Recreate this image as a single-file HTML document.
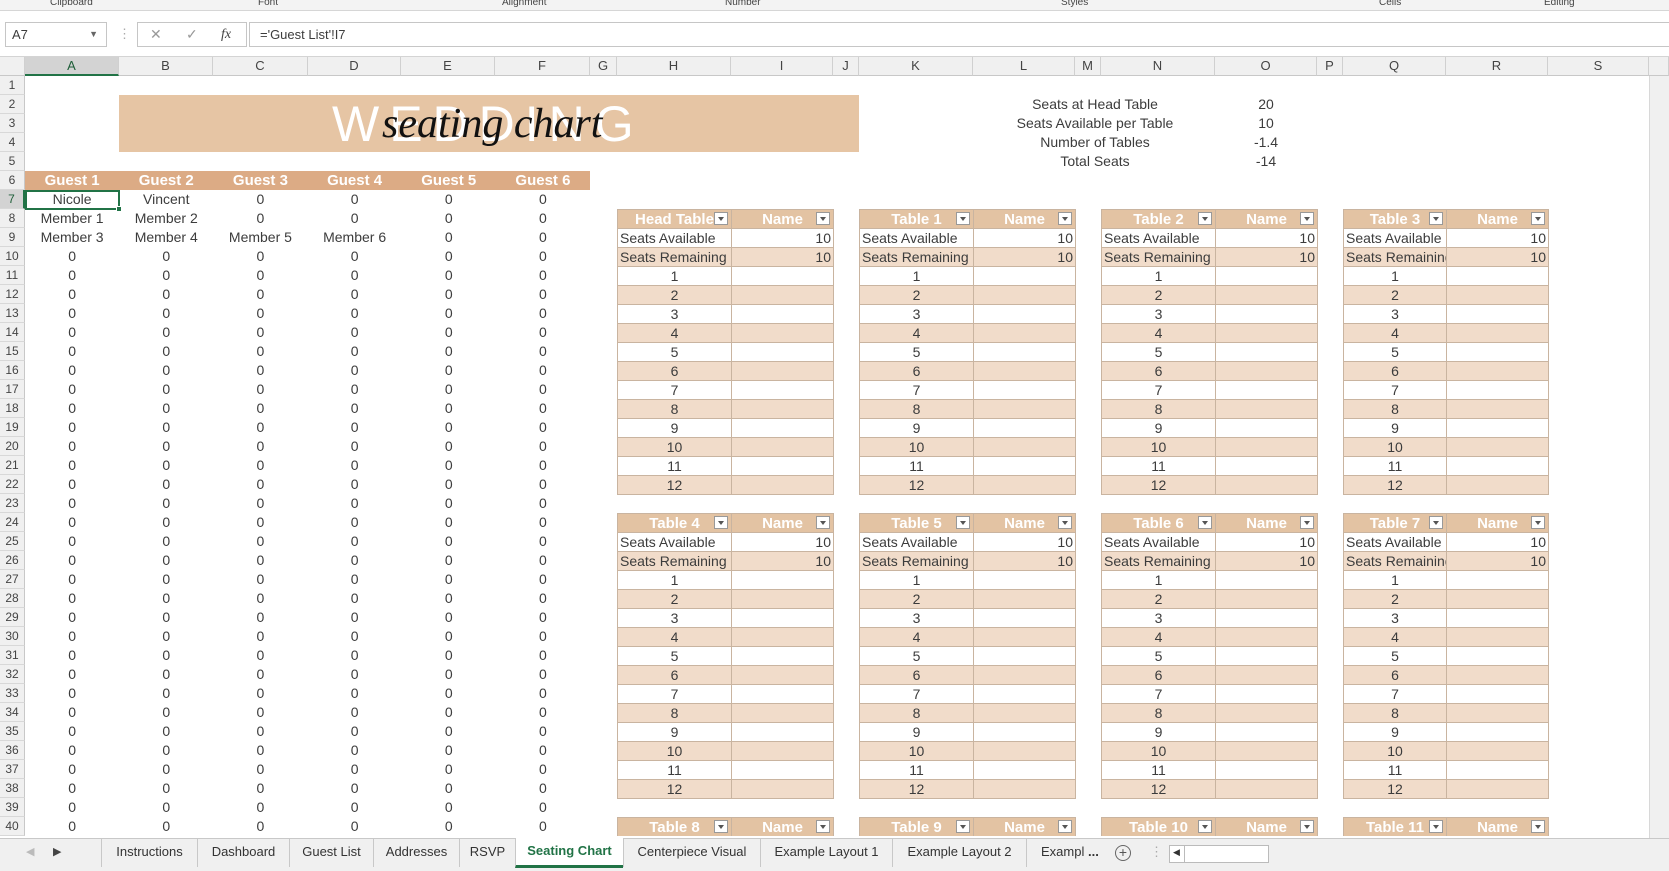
<!DOCTYPE html>
<html><head><meta charset="utf-8"><style>
*{margin:0;padding:0;box-sizing:border-box}
body{width:1669px;height:871px;overflow:hidden;background:#fff;font-family:"Liberation Sans",sans-serif;color:#3c3c3c;position:relative}
.abs{position:absolute}
.rib{left:0;top:0;width:1669px;height:11px;background:#f3f3f3;border-bottom:1px solid #d6d6d6;font-size:10px;color:#444;line-height:8px;overflow:hidden}
.rib span{position:absolute;top:-1px}
.fbar{left:0;top:11px;width:1669px;height:46px;background:#fff;border-bottom:1px solid #d4d4d4}
.nb{left:5px;top:22px;width:102px;height:25px;border:1px solid #c6c6c6;font-size:13px;line-height:23px;padding-left:6px}
.fx{left:137px;top:22px;width:110px;height:25px;border:1px solid #c6c6c6;font-size:14px;color:#999;line-height:23px}
.fin{left:249px;top:22px;width:1430px;height:25px;border:1px solid #c6c6c6;font-size:13px;line-height:23px;padding-left:10px}
.ch{top:57px;height:19px;background:#f0f0f0;border-right:1px solid #d0d0d0;border-bottom:1px solid #c8c8c8;font-size:13px;line-height:18px;text-align:center;color:#444}
.rh{left:0;width:25px;height:19px;background:#f0f0f0;border-bottom:1px solid #d8d8d8;border-right:1px solid #c8c8c8;font-size:12px;line-height:19px;text-align:center;color:#444}
.sheet{left:0;top:76px;width:1649px;height:760px;overflow:hidden}
.g{position:absolute;left:25px;width:565px;height:19px;display:flex;font-size:14px;line-height:19px}
.g div{width:94.2px;text-align:center}
.tb{position:absolute;border-collapse:collapse;font-size:14px;table-layout:fixed}
.tb td{height:19px;border:1px solid #c9b4a0;padding:0 2px;line-height:17px;white-space:nowrap;overflow:hidden}
.tb tr.h td{background:#e3c3a3;color:#fff;font-weight:bold;font-size:15px;text-align:center;position:relative}
.tb tr.b td{background:#f1dcca}
.tb td.c{text-align:center}
.tb td.r{text-align:right}
.dd{display:inline-block;width:14px;height:13px;background:#fff;border:1px solid #999;vertical-align:middle;position:absolute;right:3px;top:2px}
.dd:after{content:"";position:absolute;left:3px;top:4px;border-left:3px solid transparent;border-right:3px solid transparent;border-top:4px solid #555}
.st{position:absolute;font-size:14px;line-height:19px}
.tabs{left:0;top:838px;width:1669px;height:33px;background:#f0f0f0;border-top:1px solid #c8c8c8;font-size:13px;color:#333}
.tab{position:absolute;top:0;height:28px;line-height:26px;text-align:center;border-left:1px solid #c8c8c8}
</style></head><body>
<div class="abs rib"><span style="left:50px">Clipboard</span><span style="left:258px">Font</span><span style="left:502px">Alignment</span><span style="left:725px">Number</span><span style="left:1061px">Styles</span><span style="left:1379px">Cells</span><span style="left:1544px">Editing</span></div>
<div class="abs fbar"></div>
<div class="abs nb">A7<span style="position:absolute;right:8px;top:0;font-size:9px;color:#666">▼</span></div>
<div class="abs" style="left:118px;top:26px;font-size:13px;color:#aaa">⋮</div>
<div class="abs fx"><span style="position:absolute;left:12px">✕</span><span style="position:absolute;left:48px">✓</span><span style="position:absolute;left:83px;font-style:italic;font-family:'Liberation Serif',serif;color:#444">fx</span></div>
<div class="abs fin">='Guest List'!I7</div>

<div class="abs ch" style="left:0;width:25px;background:#f0f0f0"></div>
<div class="abs ch" style="left:25px;width:94px;background:#d3d3d3;border-bottom:2px solid #217346;color:#1e5e38">A</div>
<div class="abs ch" style="left:119px;width:94px">B</div>
<div class="abs ch" style="left:213px;width:95px">C</div>
<div class="abs ch" style="left:308px;width:93px">D</div>
<div class="abs ch" style="left:401px;width:94px">E</div>
<div class="abs ch" style="left:495px;width:95px">F</div>
<div class="abs ch" style="left:590px;width:27px">G</div>
<div class="abs ch" style="left:617px;width:114px">H</div>
<div class="abs ch" style="left:731px;width:102px">I</div>
<div class="abs ch" style="left:833px;width:26px">J</div>
<div class="abs ch" style="left:859px;width:114px">K</div>
<div class="abs ch" style="left:973px;width:102px">L</div>
<div class="abs ch" style="left:1075px;width:26px">M</div>
<div class="abs ch" style="left:1101px;width:114px">N</div>
<div class="abs ch" style="left:1215px;width:102px">O</div>
<div class="abs ch" style="left:1317px;width:26px">P</div>
<div class="abs ch" style="left:1343px;width:103px">Q</div>
<div class="abs ch" style="left:1446px;width:102px">R</div>
<div class="abs ch" style="left:1548px;width:101px">S</div>
<div class="abs ch" style="left:1649px;width:20px"></div>

<div class="abs" style="left:0;top:76px;width:25px;height:760px;overflow:hidden">
<div class="rh" style="position:relative">1</div><div class="rh" style="position:relative">2</div><div class="rh" style="position:relative">3</div><div class="rh" style="position:relative">4</div><div class="rh" style="position:relative">5</div><div class="rh" style="position:relative">6</div><div class="rh" style="position:relative;background:#d3d3d3;color:#1e5e38;border-right:2px solid #217346">7</div><div class="rh" style="position:relative">8</div><div class="rh" style="position:relative">9</div><div class="rh" style="position:relative">10</div><div class="rh" style="position:relative">11</div><div class="rh" style="position:relative">12</div><div class="rh" style="position:relative">13</div><div class="rh" style="position:relative">14</div><div class="rh" style="position:relative">15</div><div class="rh" style="position:relative">16</div><div class="rh" style="position:relative">17</div><div class="rh" style="position:relative">18</div><div class="rh" style="position:relative">19</div><div class="rh" style="position:relative">20</div><div class="rh" style="position:relative">21</div><div class="rh" style="position:relative">22</div><div class="rh" style="position:relative">23</div><div class="rh" style="position:relative">24</div><div class="rh" style="position:relative">25</div><div class="rh" style="position:relative">26</div><div class="rh" style="position:relative">27</div><div class="rh" style="position:relative">28</div><div class="rh" style="position:relative">29</div><div class="rh" style="position:relative">30</div><div class="rh" style="position:relative">31</div><div class="rh" style="position:relative">32</div><div class="rh" style="position:relative">33</div><div class="rh" style="position:relative">34</div><div class="rh" style="position:relative">35</div><div class="rh" style="position:relative">36</div><div class="rh" style="position:relative">37</div><div class="rh" style="position:relative">38</div><div class="rh" style="position:relative">39</div><div class="rh" style="position:relative">40</div>
</div>

<div class="abs sheet">
<div style="position:absolute;left:119px;top:19px;width:740px;height:57px;background:#e6c5a4"></div>
<div style="position:absolute;left:332px;top:18px;font-size:50px;color:#fff;letter-spacing:10px;line-height:60px">WEDDING</div>
<div style="position:absolute;left:382px;top:18px;font-family:'Liberation Serif',serif;font-style:italic;font-size:42px;color:#111;line-height:60px;letter-spacing:0px">seating chart</div>
<div class="st" style="left:980px;width:230px;text-align:center;top:19px">Seats at Head Table</div>
<div class="st" style="left:980px;width:230px;text-align:center;top:38px">Seats Available per Table</div>
<div class="st" style="left:980px;width:230px;text-align:center;top:57px">Number of Tables</div>
<div class="st" style="left:980px;width:230px;text-align:center;top:76px">Total Seats</div>
<div class="st" style="left:1215px;width:102px;text-align:center;top:19px">20</div>
<div class="st" style="left:1215px;width:102px;text-align:center;top:38px">10</div>
<div class="st" style="left:1215px;width:102px;text-align:center;top:57px">-1.4</div>
<div class="st" style="left:1215px;width:102px;text-align:center;top:76px">-14</div>
<div class="g" style="top:95px;background:#dcab85;color:#fff;font-weight:bold;font-size:15px"><div>Guest 1</div><div>Guest 2</div><div>Guest 3</div><div>Guest 4</div><div>Guest 5</div><div>Guest 6</div></div>
<div style="position:absolute;left:25px;top:114px;width:95px;height:20px;border:2px solid #217346"></div>
<div style="position:absolute;left:116px;top:130px;width:6px;height:6px;background:#217346;border:1px solid #fff"></div>
<div class="g" style="top:114px"><div>Nicole</div><div>Vincent</div><div>0</div><div>0</div><div>0</div><div>0</div></div>
<div class="g" style="top:133px"><div>Member 1</div><div>Member 2</div><div>0</div><div>0</div><div>0</div><div>0</div></div>
<div class="g" style="top:152px"><div>Member 3</div><div>Member 4</div><div>Member 5</div><div>Member 6</div><div>0</div><div>0</div></div>
<div class="g" style="top:171px"><div>0</div><div>0</div><div>0</div><div>0</div><div>0</div><div>0</div></div>
<div class="g" style="top:190px"><div>0</div><div>0</div><div>0</div><div>0</div><div>0</div><div>0</div></div>
<div class="g" style="top:209px"><div>0</div><div>0</div><div>0</div><div>0</div><div>0</div><div>0</div></div>
<div class="g" style="top:228px"><div>0</div><div>0</div><div>0</div><div>0</div><div>0</div><div>0</div></div>
<div class="g" style="top:247px"><div>0</div><div>0</div><div>0</div><div>0</div><div>0</div><div>0</div></div>
<div class="g" style="top:266px"><div>0</div><div>0</div><div>0</div><div>0</div><div>0</div><div>0</div></div>
<div class="g" style="top:285px"><div>0</div><div>0</div><div>0</div><div>0</div><div>0</div><div>0</div></div>
<div class="g" style="top:304px"><div>0</div><div>0</div><div>0</div><div>0</div><div>0</div><div>0</div></div>
<div class="g" style="top:323px"><div>0</div><div>0</div><div>0</div><div>0</div><div>0</div><div>0</div></div>
<div class="g" style="top:342px"><div>0</div><div>0</div><div>0</div><div>0</div><div>0</div><div>0</div></div>
<div class="g" style="top:361px"><div>0</div><div>0</div><div>0</div><div>0</div><div>0</div><div>0</div></div>
<div class="g" style="top:380px"><div>0</div><div>0</div><div>0</div><div>0</div><div>0</div><div>0</div></div>
<div class="g" style="top:399px"><div>0</div><div>0</div><div>0</div><div>0</div><div>0</div><div>0</div></div>
<div class="g" style="top:418px"><div>0</div><div>0</div><div>0</div><div>0</div><div>0</div><div>0</div></div>
<div class="g" style="top:437px"><div>0</div><div>0</div><div>0</div><div>0</div><div>0</div><div>0</div></div>
<div class="g" style="top:456px"><div>0</div><div>0</div><div>0</div><div>0</div><div>0</div><div>0</div></div>
<div class="g" style="top:475px"><div>0</div><div>0</div><div>0</div><div>0</div><div>0</div><div>0</div></div>
<div class="g" style="top:494px"><div>0</div><div>0</div><div>0</div><div>0</div><div>0</div><div>0</div></div>
<div class="g" style="top:513px"><div>0</div><div>0</div><div>0</div><div>0</div><div>0</div><div>0</div></div>
<div class="g" style="top:532px"><div>0</div><div>0</div><div>0</div><div>0</div><div>0</div><div>0</div></div>
<div class="g" style="top:551px"><div>0</div><div>0</div><div>0</div><div>0</div><div>0</div><div>0</div></div>
<div class="g" style="top:570px"><div>0</div><div>0</div><div>0</div><div>0</div><div>0</div><div>0</div></div>
<div class="g" style="top:589px"><div>0</div><div>0</div><div>0</div><div>0</div><div>0</div><div>0</div></div>
<div class="g" style="top:608px"><div>0</div><div>0</div><div>0</div><div>0</div><div>0</div><div>0</div></div>
<div class="g" style="top:627px"><div>0</div><div>0</div><div>0</div><div>0</div><div>0</div><div>0</div></div>
<div class="g" style="top:646px"><div>0</div><div>0</div><div>0</div><div>0</div><div>0</div><div>0</div></div>
<div class="g" style="top:665px"><div>0</div><div>0</div><div>0</div><div>0</div><div>0</div><div>0</div></div>
<div class="g" style="top:684px"><div>0</div><div>0</div><div>0</div><div>0</div><div>0</div><div>0</div></div>
<div class="g" style="top:703px"><div>0</div><div>0</div><div>0</div><div>0</div><div>0</div><div>0</div></div>
<div class="g" style="top:722px"><div>0</div><div>0</div><div>0</div><div>0</div><div>0</div><div>0</div></div>
<div class="g" style="top:741px"><div>0</div><div>0</div><div>0</div><div>0</div><div>0</div><div>0</div></div>

<table class="tb" style="left:617px;top:133px;width:216px"><colgroup><col style="width:114px"><col style="width:102px"></colgroup>
<tr class="h"><td>Head Table<span class="dd"></span></td><td>Name<span class="dd"></span></td></tr>
<tr><td>Seats Available</td><td class="r">10</td></tr><tr class="b"><td>Seats Remaining</td><td class="r">10</td></tr>
<tr><td class="c">1</td><td></td></tr><tr class="b"><td class="c">2</td><td></td></tr><tr><td class="c">3</td><td></td></tr><tr class="b"><td class="c">4</td><td></td></tr><tr><td class="c">5</td><td></td></tr><tr class="b"><td class="c">6</td><td></td></tr><tr><td class="c">7</td><td></td></tr><tr class="b"><td class="c">8</td><td></td></tr><tr><td class="c">9</td><td></td></tr><tr class="b"><td class="c">10</td><td></td></tr><tr><td class="c">11</td><td></td></tr><tr class="b"><td class="c">12</td><td></td></tr></table>
<table class="tb" style="left:859px;top:133px;width:216px"><colgroup><col style="width:114px"><col style="width:102px"></colgroup>
<tr class="h"><td>Table 1<span class="dd"></span></td><td>Name<span class="dd"></span></td></tr>
<tr><td>Seats Available</td><td class="r">10</td></tr><tr class="b"><td>Seats Remaining</td><td class="r">10</td></tr>
<tr><td class="c">1</td><td></td></tr><tr class="b"><td class="c">2</td><td></td></tr><tr><td class="c">3</td><td></td></tr><tr class="b"><td class="c">4</td><td></td></tr><tr><td class="c">5</td><td></td></tr><tr class="b"><td class="c">6</td><td></td></tr><tr><td class="c">7</td><td></td></tr><tr class="b"><td class="c">8</td><td></td></tr><tr><td class="c">9</td><td></td></tr><tr class="b"><td class="c">10</td><td></td></tr><tr><td class="c">11</td><td></td></tr><tr class="b"><td class="c">12</td><td></td></tr></table>
<table class="tb" style="left:1101px;top:133px;width:216px"><colgroup><col style="width:114px"><col style="width:102px"></colgroup>
<tr class="h"><td>Table 2<span class="dd"></span></td><td>Name<span class="dd"></span></td></tr>
<tr><td>Seats Available</td><td class="r">10</td></tr><tr class="b"><td>Seats Remaining</td><td class="r">10</td></tr>
<tr><td class="c">1</td><td></td></tr><tr class="b"><td class="c">2</td><td></td></tr><tr><td class="c">3</td><td></td></tr><tr class="b"><td class="c">4</td><td></td></tr><tr><td class="c">5</td><td></td></tr><tr class="b"><td class="c">6</td><td></td></tr><tr><td class="c">7</td><td></td></tr><tr class="b"><td class="c">8</td><td></td></tr><tr><td class="c">9</td><td></td></tr><tr class="b"><td class="c">10</td><td></td></tr><tr><td class="c">11</td><td></td></tr><tr class="b"><td class="c">12</td><td></td></tr></table>
<table class="tb" style="left:1343px;top:133px;width:205px"><colgroup><col style="width:103px"><col style="width:102px"></colgroup>
<tr class="h"><td>Table 3<span class="dd"></span></td><td>Name<span class="dd"></span></td></tr>
<tr><td>Seats Available</td><td class="r">10</td></tr><tr class="b"><td>Seats Remaining</td><td class="r">10</td></tr>
<tr><td class="c">1</td><td></td></tr><tr class="b"><td class="c">2</td><td></td></tr><tr><td class="c">3</td><td></td></tr><tr class="b"><td class="c">4</td><td></td></tr><tr><td class="c">5</td><td></td></tr><tr class="b"><td class="c">6</td><td></td></tr><tr><td class="c">7</td><td></td></tr><tr class="b"><td class="c">8</td><td></td></tr><tr><td class="c">9</td><td></td></tr><tr class="b"><td class="c">10</td><td></td></tr><tr><td class="c">11</td><td></td></tr><tr class="b"><td class="c">12</td><td></td></tr></table>
<table class="tb" style="left:617px;top:437px;width:216px"><colgroup><col style="width:114px"><col style="width:102px"></colgroup>
<tr class="h"><td>Table 4<span class="dd"></span></td><td>Name<span class="dd"></span></td></tr>
<tr><td>Seats Available</td><td class="r">10</td></tr><tr class="b"><td>Seats Remaining</td><td class="r">10</td></tr>
<tr><td class="c">1</td><td></td></tr><tr class="b"><td class="c">2</td><td></td></tr><tr><td class="c">3</td><td></td></tr><tr class="b"><td class="c">4</td><td></td></tr><tr><td class="c">5</td><td></td></tr><tr class="b"><td class="c">6</td><td></td></tr><tr><td class="c">7</td><td></td></tr><tr class="b"><td class="c">8</td><td></td></tr><tr><td class="c">9</td><td></td></tr><tr class="b"><td class="c">10</td><td></td></tr><tr><td class="c">11</td><td></td></tr><tr class="b"><td class="c">12</td><td></td></tr></table>
<table class="tb" style="left:859px;top:437px;width:216px"><colgroup><col style="width:114px"><col style="width:102px"></colgroup>
<tr class="h"><td>Table 5<span class="dd"></span></td><td>Name<span class="dd"></span></td></tr>
<tr><td>Seats Available</td><td class="r">10</td></tr><tr class="b"><td>Seats Remaining</td><td class="r">10</td></tr>
<tr><td class="c">1</td><td></td></tr><tr class="b"><td class="c">2</td><td></td></tr><tr><td class="c">3</td><td></td></tr><tr class="b"><td class="c">4</td><td></td></tr><tr><td class="c">5</td><td></td></tr><tr class="b"><td class="c">6</td><td></td></tr><tr><td class="c">7</td><td></td></tr><tr class="b"><td class="c">8</td><td></td></tr><tr><td class="c">9</td><td></td></tr><tr class="b"><td class="c">10</td><td></td></tr><tr><td class="c">11</td><td></td></tr><tr class="b"><td class="c">12</td><td></td></tr></table>
<table class="tb" style="left:1101px;top:437px;width:216px"><colgroup><col style="width:114px"><col style="width:102px"></colgroup>
<tr class="h"><td>Table 6<span class="dd"></span></td><td>Name<span class="dd"></span></td></tr>
<tr><td>Seats Available</td><td class="r">10</td></tr><tr class="b"><td>Seats Remaining</td><td class="r">10</td></tr>
<tr><td class="c">1</td><td></td></tr><tr class="b"><td class="c">2</td><td></td></tr><tr><td class="c">3</td><td></td></tr><tr class="b"><td class="c">4</td><td></td></tr><tr><td class="c">5</td><td></td></tr><tr class="b"><td class="c">6</td><td></td></tr><tr><td class="c">7</td><td></td></tr><tr class="b"><td class="c">8</td><td></td></tr><tr><td class="c">9</td><td></td></tr><tr class="b"><td class="c">10</td><td></td></tr><tr><td class="c">11</td><td></td></tr><tr class="b"><td class="c">12</td><td></td></tr></table>
<table class="tb" style="left:1343px;top:437px;width:205px"><colgroup><col style="width:103px"><col style="width:102px"></colgroup>
<tr class="h"><td>Table 7<span class="dd"></span></td><td>Name<span class="dd"></span></td></tr>
<tr><td>Seats Available</td><td class="r">10</td></tr><tr class="b"><td>Seats Remaining</td><td class="r">10</td></tr>
<tr><td class="c">1</td><td></td></tr><tr class="b"><td class="c">2</td><td></td></tr><tr><td class="c">3</td><td></td></tr><tr class="b"><td class="c">4</td><td></td></tr><tr><td class="c">5</td><td></td></tr><tr class="b"><td class="c">6</td><td></td></tr><tr><td class="c">7</td><td></td></tr><tr class="b"><td class="c">8</td><td></td></tr><tr><td class="c">9</td><td></td></tr><tr class="b"><td class="c">10</td><td></td></tr><tr><td class="c">11</td><td></td></tr><tr class="b"><td class="c">12</td><td></td></tr></table>
<table class="tb" style="left:617px;top:741px;width:216px"><colgroup><col style="width:114px"><col style="width:102px"></colgroup>
<tr class="h"><td>Table 8<span class="dd"></span></td><td>Name<span class="dd"></span></td></tr><tr><td>Seats Available</td><td class="r">10</td></tr></table>
<table class="tb" style="left:859px;top:741px;width:216px"><colgroup><col style="width:114px"><col style="width:102px"></colgroup>
<tr class="h"><td>Table 9<span class="dd"></span></td><td>Name<span class="dd"></span></td></tr><tr><td>Seats Available</td><td class="r">10</td></tr></table>
<table class="tb" style="left:1101px;top:741px;width:216px"><colgroup><col style="width:114px"><col style="width:102px"></colgroup>
<tr class="h"><td>Table 10<span class="dd"></span></td><td>Name<span class="dd"></span></td></tr><tr><td>Seats Available</td><td class="r">10</td></tr></table>
<table class="tb" style="left:1343px;top:741px;width:205px"><colgroup><col style="width:103px"><col style="width:102px"></colgroup>
<tr class="h"><td>Table 11<span class="dd"></span></td><td>Name<span class="dd"></span></td></tr><tr><td>Seats Available</td><td class="r">10</td></tr></table>
</div>
<div class="abs" style="left:1649px;top:76px;width:20px;height:762px;background:#f0f0f0;border-left:1px solid #d8d8d8"></div>

<div class="abs tabs">
<span style="position:absolute;left:26px;top:6px;color:#bbb;font-size:11px">◀</span>
<span style="position:absolute;left:53px;top:6px;color:#444;font-size:11px">▶</span>
<div class="tab" style="left:101px;width:96px">Instructions</div>
<div class="tab" style="left:197px;width:92px">Dashboard</div>
<div class="tab" style="left:289px;width:84px">Guest List</div>
<div class="tab" style="left:373px;width:86px">Addresses</div>
<div class="tab" style="left:459px;width:56px">RSVP</div>
<div class="tab" style="left:515px;width:108px;background:#fff;color:#217346;font-weight:bold;border-bottom:3px solid #217346;top:-1px;height:30px">Seating Chart</div>
<div class="tab" style="left:623px;width:137px">Centerpiece Visual</div>
<div class="tab" style="left:760px;width:132px">Example Layout 1</div>
<div class="tab" style="left:892px;width:134px">Example Layout 2</div>
<div class="tab" style="left:1026px;width:80px;text-align:left;padding-left:14px">Exampl <b>...</b></div>
<div style="position:absolute;left:1115px;top:6px;width:16px;height:16px;border:1px solid #666;border-radius:50%;text-align:center;line-height:13px;font-size:14px;color:#555">+</div>
<span style="position:absolute;left:1150px;top:5px;color:#aaa">⋮</span>
<div style="position:absolute;left:1169px;top:6px;width:100px;height:18px;border:1px solid #bbb;background:#fff"><span style="position:absolute;left:3px;top:1px;font-size:9px">◀</span><div style="position:absolute;left:14px;top:0;width:1px;height:16px;background:#bbb"></div></div>
</div>
</body></html>
